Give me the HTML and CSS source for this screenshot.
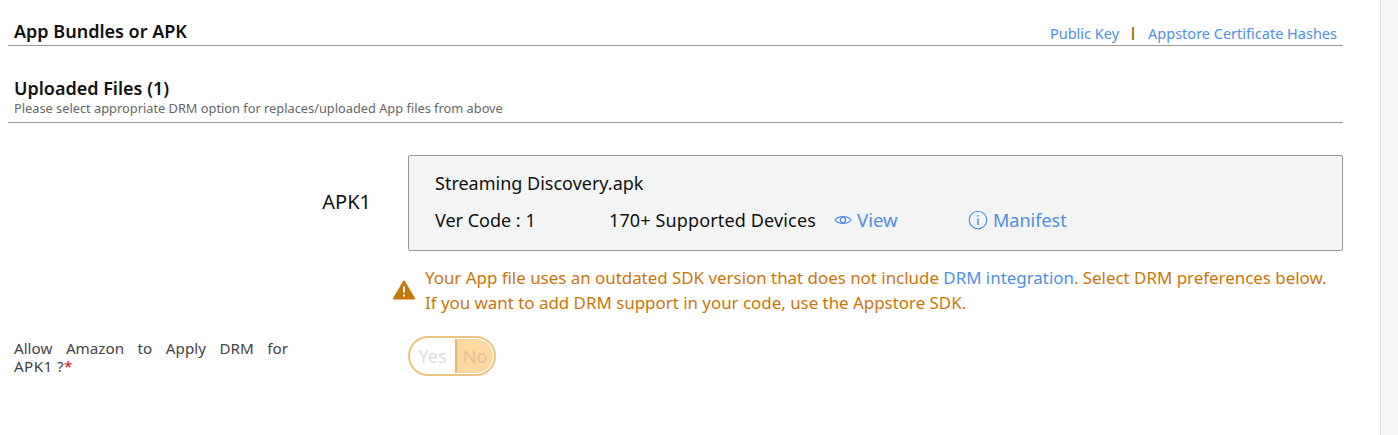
FILE: index.html
```html
<!DOCTYPE html>
<html lang="en">
  <head>
    <meta charset="UTF-8" />
    <title>App Bundles or APK</title>
    <link rel="stylesheet" href="styles.css">
  </head>
  <body>
    <div id="page">
      <div class="section-head">
        <h3>App Bundles or APK</h3>
        <div class="head-links">
          <a href="#">Public Key</a>
          <span class="divider"></span>
          <a href="#">Appstore Certificate Hashes</a>
        </div>
      </div>

      <div class="uploaded-head">
        <h3>Uploaded Files (1)</h3>
        <p>Please select appropriate DRM option for replaces/uploaded App files from above</p>
      </div>

      <div class="apk-row">
        <div class="apk-label">APK1</div>
        <div class="apk-card">
          <div class="apk-name">Streaming Discovery.apk</div>
          <div class="apk-meta">
            <span class="ver-code">Ver Code : 1</span>
            <span class="devices">170+ Supported Devices</span>
            <a class="view-link" href="#">
              <svg width="18" height="12" viewBox="0 0 18 12" fill="none" stroke="currentColor" stroke-width="1.2">
                <path d="M1 6 C4 1.5 14 1.5 17 6 C14 10.5 4 10.5 1 6 Z" />
                <circle cx="9" cy="6" r="2.6" />
              </svg>
              View
            </a>
            <a class="manifest-link" href="#">
              <svg width="20" height="20" viewBox="0 0 20 20" fill="none" stroke="currentColor" stroke-width="1.1">
                <circle cx="10" cy="10" r="8.8" />
                <path d="M10 8.6 V15" stroke-width="1.5" />
                <path d="M10 5 V6.6" stroke-width="1.5" />
              </svg>
              Manifest
            </a>
          </div>
        </div>
      </div>

      <div class="warning-row">
        <svg class="warning-icon" width="22" height="20" viewBox="0 0 22 20">
          <path d="M11 1.5 L21 18.5 H1 Z" fill="#c7770a" stroke="#c7770a" stroke-width="2" stroke-linejoin="round" />
          <path d="M11 6.5 V12.5 M11 14.5 V16.5" stroke="#fff" stroke-width="2" />
        </svg>
        <p>Your App file uses an outdated SDK version that does not include <a href="#">DRM integration</a>. Select DRM preferences below.<br>If you want to add DRM support in your code, use the Appstore SDK.</p>
      </div>

      <div class="drm-row">
        <label class="drm-label">Allow Amazon to Apply DRM for <span class="nowrap">APK1 ?<span class="required">*</span></span></label>
        <div class="toggle">
          <span class="toggle-yes">Yes</span>
          <span class="toggle-no">No</span>
        </div>
      </div>
    </div>
    <div class="scroll-strip"></div>
  </body>
</html>
```

FILE: styles.css
```css
html,
body {
  height: 100%;
}
body {
  margin: 0;
  display: flex;
  background: #fff;
  color: #111;
  font-family: "Noto Sans", sans-serif;
  overflow: hidden;
}
#page {
  width: 1343px;
  padding-left: 8px;
  padding-top: 20px;
  box-sizing: border-box;
  flex: none;
}
.scroll-strip {
  margin-left: auto;
  width: 18px;
  background: #f6f6f9;
  border-left: 1px solid #e4e4e4;
  box-sizing: border-box;
}
a {
  color: #4f8fe6;
  text-decoration: none;
}
h3 {
  margin: 0;
  font-size: 18px;
  font-weight: 600;
  line-height: 24px;
}
.section-head {
  display: flex;
  justify-content: space-between;
  align-items: flex-end;
  height: 25px;
  padding: 0 6px;
  border-bottom: 1px solid #999;
}
.section-head h3 {
  padding-bottom: 2px;
}
.head-links {
  display: flex;
  align-items: center;
  padding-bottom: 2px;
  font-size: 14.5px;
  line-height: 20px;
}
.divider {
  width: 2px;
  height: 13px;
  margin: 0 14px 0 13px;
  background: #c7770a;
}
.uploaded-head {
  margin-top: 31px;
  padding: 0 6px 6px;
  border-bottom: 1px solid #999;
}
.uploaded-head h3 {
  margin-bottom: 2px;
  line-height: 22px;
}
.uploaded-head p {
  margin: 0;
  font-size: 12.8px;
  line-height: 15px;
  color: #666;
}
.apk-row {
  display: flex;
  margin-top: 32px;
}
.apk-label {
  width: 363px;
  padding-top: 35px;
  font-size: 20px;
  line-height: 24px;
  text-align: right;
  flex: none;
}
.apk-card {
  margin-left: 37px;
  flex: 1;
  height: 96px;
  box-sizing: border-box;
  padding: 15px 26px;
  background: #f3f4f4;
  border: 1px solid #999;
  border-radius: 2px;
  font-size: 18px;
}
.apk-name {
  line-height: 24px;
}
.apk-meta {
  display: flex;
  align-items: center;
  margin-top: 13px;
  line-height: 24px;
}
.ver-code {
  width: 174px;
}
.devices {
  width: 207px;
  letter-spacing: 0.14px;
  white-space: nowrap;
}
.view-link {
  display: flex;
  align-items: center;
  gap: 5px;
  margin-left: 18px;
  width: 134px;
  font-size: 18.6px;
}
.manifest-link {
  display: flex;
  align-items: center;
  gap: 5px;
}
.warning-row {
  display: flex;
  align-items: center;
  margin: 14px 0 0 385px;
  color: #c7770a;
  font-size: 16.9px;
  line-height: 25px;
}
.warning-row p {
  margin: 0 0 0 10px;
  white-space: nowrap;
}
.drm-row {
  display: flex;
  margin-top: 21px;
  padding-left: 6px;
}
.drm-label {
  width: 274px;
  margin-top: 3px;
  font-size: 15.2px;
  line-height: 18px;
  text-align: justify;
  color: #444;
  flex: none;
}
.nowrap {
  letter-spacing: 0.4px;
  white-space: nowrap;
}
.required {
  color: #d0021b;
}
.toggle {
  display: flex;
  margin-left: 120px;
  width: 88px;
  height: 40px;
  box-sizing: border-box;
  border: 2px solid #ecc27f;
  border-radius: 20px;
  overflow: hidden;
  font-size: 18px;
  line-height: 36px;
}
.toggle-yes {
  width: 45px;
  text-align: center;
  color: #ddd;
}
.toggle-no {
  flex: 1;
  margin: 1px 1px 1px 0;
  border-left: 2px solid #e8b566;
  border-radius: 0 17px 17px 0;
  background: #fcd9a0;
  color: #e5c391;
  line-height: 34px;
  text-align: center;
}
```
